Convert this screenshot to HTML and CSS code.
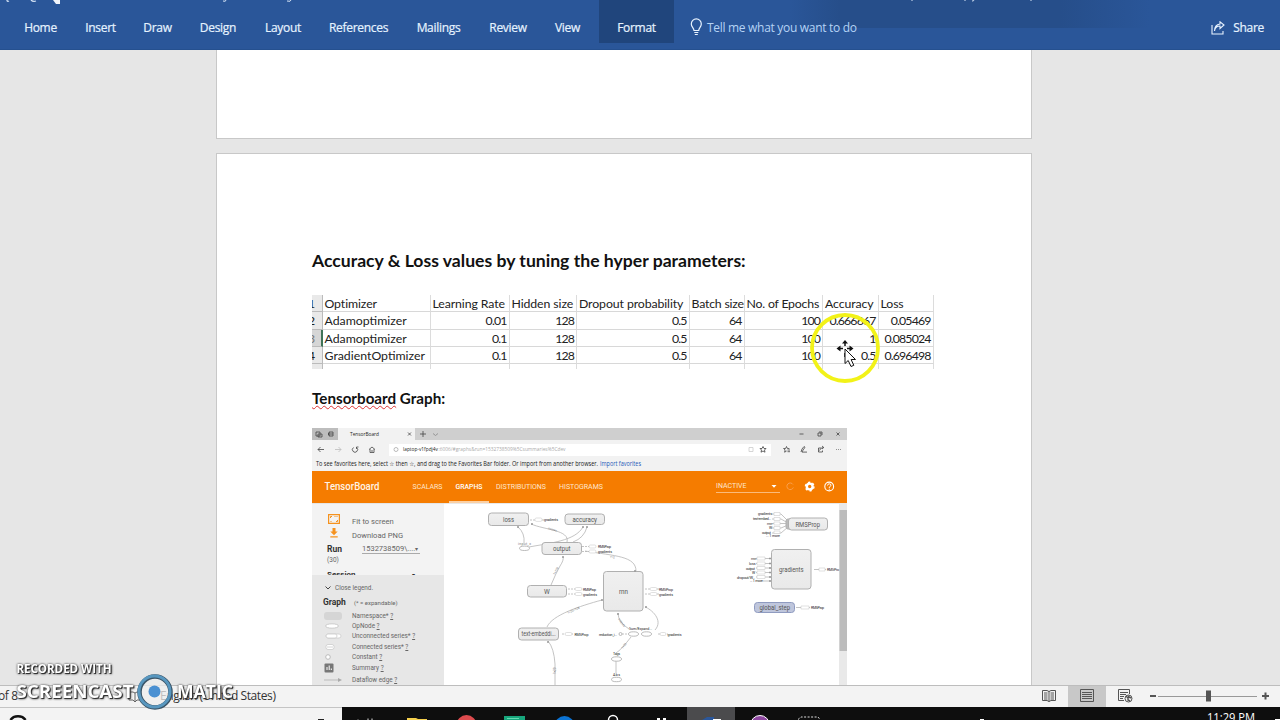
FILE: index.html
```html
<!DOCTYPE html>
<html lang="en">
<head>
<meta charset="utf-8">
<title>Word</title>
<link rel="stylesheet" href="styles.css">
</head>
<body>
<header class="ribbon">
  <svg class="titlebits" width="1280" height="5" viewBox="0 0 1280 5">
    <path d="M7 0q0 2 2 1M31 0q2 2 5 1" stroke="#d6e4f6" fill="none" stroke-width="1.3"/>
    <path d="M53 0h7v4h-4z" fill="#f1f5fb"/>
    <path d="M223 1q3 1 3-1M287 1q4 1 4-1M912 0v1M965 1v-1M974 0q0 1-2 1M1031 0v1" stroke="#d6e4f6" fill="none"/>
  </svg>
  <nav class="tabs">
    <span class="w33">Home</span><span class="w29">Insert</span><span class="w27">Draw</span><span class="w36">Design</span><span class="w36">Layout</span><span class="w57">References</span><span class="w45">Mailings</span><span class="w36">Review</span><span class="w25">View</span>
  </nav>
  <div class="format">Format</div>
  <div class="tell">
    <svg width="13" height="18" viewBox="0 0 13 18" fill="none" stroke="#e8f3ff" stroke-width="1.2"><path d="M4 12.5C4 10 1.3 9 1.3 5.9a5 5 0 0 1 10 0C11.300 9 8.700 10 8.700 12.500zM4.300 14.500h4M4.800 16.500h3"/></svg>
    <span>Tell me what you want to do</span>
  </div>
  <div class="share">
    <svg width="14" height="14" viewBox="0 0 14 14" fill="none" stroke="#e8f3ff" stroke-width="1.1"><path d="M1 4v9h11v-3M3.500 10C4 6.500 6 5 9 5V7.500L13 4 9 .8V3C5.500 3.500 3.500 6 3.500 10z"/></svg>
    <span>Share</span>
  </div>
</header>

<main class="workspace">
  <section class="page page-prev"></section>
  <section class="page page-main">
    <h1>Accuracy &amp; Loss values by tuning the hyper parameters:</h1>
    <div class="sheet">
      <div class="row">
        <b class="idx">1</b><i>Optimizer</i><i>Learning Rate</i><i>Hidden size</i><i>Dropout probability</i><i class="snug">Batch size</i><i class="snug">No. of Epochs</i><i>Accuracy</i><i>Loss</i>
      </div>
      <div class="row num">
        <b class="idx">2</b><i>Adamoptimizer</i><i>0.01</i><i>128</i><i>0.5</i><i>64</i><i>100</i><i>0.666667</i><i>0.05469</i>
      </div>
      <div class="row num">
        <b class="idx sel">3</b><i>Adamoptimizer</i><i>0.1</i><i>128</i><i>0.5</i><i>64</i><i>100</i><i>1</i><i>0.085024</i>
      </div>
      <div class="row num">
        <b class="idx">4</b><i>GradientOptimizer</i><i>0.1</i><i>128</i><i>0.5</i><i>64</i><i>100</i><i>0.5</i><i>0.696498</i>
      </div>
      <div class="row tail"><b class="idx"></b><i></i><i></i><i></i><i></i><i></i><i></i><i></i><i></i></div>
    </div>
    <h2><span class="misspelt">Tensorboard</span> Graph:</h2>

    <div class="shot">
      <svg class="browser" width="535" height="43" viewBox="312 428 535 43">
        <path fill="#cfcfcf" d="M312 428h535v12H312z"/>
        <path fill="#bdbdbd" d="M312 428h26v12h-26z"/>
        <path fill="#f2f2f2" d="M338 428h77v12h-77zM312 440h535v31H312z"/>
        <path fill="#fff" d="M389 444h382v12H389z"/>
        <g fill="none" stroke="#444" stroke-width=".8">
          <path d="M316 432h4v4h-4zM318 434h4v3h-4zM329 432h4v4h-4zM333 434h-5m1.500-1.500L328 434l1.500 1.500"/>
          <path d="M408 432.500l3 3m0-3l-3 3M420 434h6m-3-3v6"/>
          <path stroke="#888" d="M433 433.500l2.500 2 2.500-2"/>
          <path d="M799.500 434h4M818 433h3v3h-3zM819 432h3v3M836.500 432.500l3 3m0-3l-3 3"/>
          <path d="M324 449.500h-6m2.500-2.500-2.500 2.500 2.500 2.500"/>
          <path stroke="#bbb" d="M335 449.500h6m-2.500-2.500 2.500 2.500-2.500 2.500"/>
          <path d="M353.500 447.500a2.600 2.600 0 1 0 3 0M356.500 449v-2h2"/>
          <path d="M369 449.500l3-2.500 3 2.500M370 449v3.500h4V449M372 450v2"/>
          <circle stroke="#aaa" cx="396" cy="449.500" r="2"/>
          <path stroke="#ccc" d="M749 447.500h4v4h-4z"/>
          <path d="M763 446.500l1 2h2l-1.500 1.500.5 2.200-2-1.200-2 1.200.5-2.200-1.500-1.500h2z"/>
          <path d="M786.500 446.500l.9 2h2M786.500 446.500l-.9 2h-2l1.500 1.500-.5 2.200 2-1.200M787.500 450h2.500m-2.500 1.700h2.500M801 452l1-3 2-2.500 1 .8-2 2.800-1 2h5M821 448h-2.500v4h4v-1.500M819.500 450.500q1-3 4-3m-1.500-1.500 1.800 1.500-1.800 1.500"/>
          <path stroke="#777" stroke-dasharray="1 1" d="M836 449.500h5"/>
        </g>
        <g class="tiny" font-size="5.600">
          <text x="350" y="436" textLength="29" lengthAdjust="spacingAndGlyphs">TensorBoard</text>
          <text x="403" y="451.300" textLength="35" lengthAdjust="spacingAndGlyphs">laptop-v1fpdj4v</text>
          <text x="438.500" y="451.300" textLength="127" lengthAdjust="spacingAndGlyphs" fill="#aaa">:6006/#graphs&amp;run=1532738509%5Csummaries%5Cdev</text>
          <text x="316" y="466.300" font-size="6.200" textLength="282" lengthAdjust="spacingAndGlyphs">To see favorites here, select ☆ then ☆, and drag to the Favorites Bar folder. Or import from another browser.</text>
          <text x="600" y="466.300" font-size="6.200" textLength="41" lengthAdjust="spacingAndGlyphs" fill="#1d58b8">Import favorites</text>
        </g>
      </svg>
      <div class="tbbar">
        <svg width="535" height="32" viewBox="312 471 535 32">
          <g class="robo" fill="#ffe6cf" font-size="7">
            <text x="324.500" y="490" fill="#fff3e6" font-size="10.400" font-weight="500" textLength="55" lengthAdjust="spacingAndGlyphs">TensorBoard</text>
            <text x="412.500" y="488.500" textLength="30" lengthAdjust="spacingAndGlyphs">SCALARS</text>
            <text x="455.500" y="488.500" fill="#fff" font-weight="500" textLength="27" lengthAdjust="spacingAndGlyphs">GRAPHS</text>
            <text x="496" y="488.500" textLength="50" lengthAdjust="spacingAndGlyphs">DISTRIBUTIONS</text>
            <text x="559" y="488.500" textLength="44" lengthAdjust="spacingAndGlyphs">HISTOGRAMS</text>
            <text x="716" y="488.300" textLength="30.500" lengthAdjust="spacingAndGlyphs">INACTIVE</text>
          </g>
          <path fill="#fbd0a4" d="M449 501h40v2h-40zM716 492.300h64v.8h-64z"/>
          <path fill="#fff" d="M771.500 485h5l-2.500 2.800z"/>
          <path fill="none" stroke="#f9a04d" d="M793 484.500a3.300 3.300 0 1 0 .3 3"/>
          <circle cx="809.700" cy="486.500" r="2.900" fill="none" stroke="#fff" stroke-width="2.400"/>
          <circle cx="809.700" cy="486.500" r="4.300" fill="none" stroke="#fff" stroke-width="1.400" stroke-dasharray="2.250 2.250"/>
          <circle cx="829.200" cy="486.500" r="4.400" fill="none" stroke="#fff" stroke-width="1.100"/>
          <path d="M827.500 485.500q.2-1.700 1.800-1.700t1.600 1.500q0 1-1.600 1.800v.8m0 .8v1" fill="none" stroke="#fff"/>
        </svg>
      </div>
      <div class="tbbody">
        <aside>
          <div class="ctl">
            <div class="ctlrow"><svg width="12" height="10" viewBox="0 0 12 10" fill="none" stroke="#f5921e"><path d="M.6.6h10.800v8.800H.6z" stroke-width="1.200"/><path d="M2.500 4V2.500H4M8 7.500h1.500V6" /><path d="M6.500 2.500h3M2.500 7.500h2" stroke-dasharray="1 1"/></svg><span>Fit to screen</span></div>
            <div class="ctlrow"><svg width="12" height="10" viewBox="0 0 12 10" fill="#f5921e"><path d="M4.500 0h3v3.500h2.200L6 7.200 2.300 3.500h2.200zM2.300 8.200h7.400v1.300H2.300z"/></svg><span>Download PNG</span></div>
            <div class="run"><strong>Run</strong><span class="pick">1532738509\....<em>▾</em></span></div>
            <div class="count">(30)</div>
            <div class="session"><strong>Session</strong><em>▾</em></div>
          </div>
          <div class="legend">
            <div class="close"><svg width="6" height="4" viewBox="0 0 6 4"><path d="M.5.5 3 3 5.500.5" fill="none" stroke="#444"/></svg>Close legend.</div>
            <div class="lgraph"><strong>Graph</strong><span>(* = expandable)</span></div>
            <div class="lrow"><svg width="20" height="10"><rect x="1" y="1" width="18" height="8" rx="3" fill="#d5d5d5"/></svg><span>Namespace* <u>?</u></span></div>
            <div class="lrow"><svg width="20" height="10"><ellipse cx="9" cy="5" rx="6.500" ry="2.200" fill="#fff" stroke="#ccc"/></svg><span>OpNode <u>?</u></span></div>
            <div class="lrow"><svg width="20" height="10"><g fill="#fff" stroke="#ccc" stroke-width=".8"><rect x="3" y="3" width="15" height="4" rx="2"/><rect x="3" y="3" width="11" height="4" rx="2"/></g></svg><span>Unconnected series* <u>?</u></span></div>
            <div class="lrow"><svg width="20" height="10"><g fill="#fff" stroke="#ccc" stroke-width=".8"><rect x="3" y="2.500" width="8" height="5" rx="2"/><path d="M4 5h6"/></g></svg><span>Connected series* <u>?</u></span></div>
            <div class="lrow"><svg width="20" height="10"><circle cx="5" cy="5" r="2.300" fill="#fff" stroke="#bbb"/></svg><span>Constant <u>?</u></span></div>
            <div class="lrow tall"><svg width="20" height="10"><rect x="1.500" y=".5" width="9" height="9" rx="1" fill="#777"/><path d="M4 7V4m2.200 3V2.500M8.300 7V5.500" stroke="#fff"/></svg><span>Summary <u>?</u></span></div>
            <div class="lrow tall"><svg width="20" height="10"><path d="M1 5h15" stroke="#bbb"/><path d="M15 3l4 2-4 2z" fill="#aaa"/></svg><span>Dataflow edge <u>?</u></span></div>
          </div>
        </aside>
        <svg class="graph" width="403" height="182" viewBox="444 503 403 182">
          <defs>
            <linearGradient id="node" x1="0" y1="0" x2="0" y2="1"><stop offset="0" stop-color="#f0f0f0"/><stop offset="1" stop-color="#e9e9e9"/></linearGradient>
          </defs>
          <path fill="#fff" d="M444 503h403v182H444z"/>
          <path fill="#e9e9e9" d="M444 503h403v1H444zM839 504h8v181h-8z"/>
          <path fill="#bcbcbc" d="M839.500 510h7.500v141h-7.500z"/>
          <g fill="none" stroke="#b5b5b5" stroke-width=".8">
            <path d="M524 543Q525 533 518 527M529 547C550 543 575 541 583 527M567 542C570 530 545 530 531 524M573 542Q584 538 587 527"/>
            <path d="M551 585Q556 573 560 566Q564 560 563 557M585 551C615 556 636 556 636 571"/>
            <path d="M547 627C552 615 580 606 602 600M555 685V664Q554 648 548 641M629 629Q618 622 618 613M655 630C664 620 651 609 645 607M616 653Q621 650 631 637M616 673V661"/>
            <path stroke-dasharray="2 1" d="M530 520h14M582 546.500h15M582 551.500h15M568 589h14M568 594h14M645 589h14M645 594h14M562 634h12M658 634h10M619 634h9"/>
            <path d="M772 514h9l8 8M772 519h9l7 4M772 523.500h15M772 528h9l7-3M772 533h9l7-6M756 558.500h16M756 563.500h16M756 568h16M756 572.500h16M756 577h16M763 581h9M814 569.500h12M796 607.500h14"/>
          </g>
          <g fill="#fff" stroke="#ccc" stroke-width=".6">
            <rect x="535" y="518" width="7" height="3.400" rx="1.500"/><rect x="589" y="545" width="7" height="3" rx="1.500"/><rect x="589" y="550" width="7" height="3" rx="1.500"/><rect x="575" y="587.500" width="7" height="3" rx="1.500"/><rect x="575" y="592.500" width="7" height="3" rx="1.500"/><rect x="650" y="587.500" width="7" height="3" rx="1.500"/><rect x="650" y="592.500" width="7" height="3" rx="1.500"/><rect x="565" y="632.500" width="7" height="3" rx="1.500"/><rect x="660" y="632.500" width="6" height="3" rx="1.500"/>
            <path d="M774 512.500h6v3h-6zM774 517.500h6v3h-6zM774 522h6v3h-6zM774 526.500h6v3h-6zM774 531h6v2.500h-6zM757 557h8v3h-8zM757 562h8v3h-8zM757 566.500h8v3h-8zM757 571h8v3h-8zM757 575.500h8v3h-8zM819 568h6v3h-6zM801 606h8v3h-8z"/>
          </g>
          <g fill="#fff" stroke="#aaa" stroke-width=".8">
            <ellipse cx="524.500" cy="548.300" rx="5" ry="2.200"/><ellipse cx="633.500" cy="634" rx="5" ry="2.200"/><ellipse cx="646.500" cy="634" rx="5" ry="2.200"/><ellipse cx="616.500" cy="659" rx="5" ry="2.200"/><ellipse cx="616.500" cy="679.500" rx="5" ry="2.200"/><circle cx="620.500" cy="634" r="1.500"/>
          </g>
          <g fill="url(#node)" stroke="#b0b0b0">
            <rect x="488.500" y="513" width="40" height="12.500" rx="3"/><rect x="565" y="514" width="39.500" height="10.500" rx="3"/><rect x="542" y="542.500" width="39.500" height="12" rx="3"/><rect x="527.500" y="585.500" width="39" height="11.500" rx="3"/><rect x="603.500" y="571.500" width="39.500" height="39.500" rx="3"/><rect x="518.500" y="628" width="40" height="12" rx="3"/><rect x="786" y="519" width="6" height="10" rx="2" fill="#bbb"/><rect x="788.500" y="518" width="39" height="12" rx="3"/><rect x="771.500" y="549.500" width="39.500" height="39.500" rx="3"/>
            <rect x="754.500" y="602.500" width="40" height="10" rx="3" fill="#bfc6dc" stroke="#8f9bc0"/>
          </g>
          <path fill="none" stroke="#999" stroke-width="1.500" d="M769 558.500h2M769 563.500h2M769 568h2M769 572.500h2M769 577h2M769 581h2M563 556v2M635 570v2M601 600h2M518 526v2M583 526v2M587 526v2M531 524h2M618 613v2M645 607h2M548 641v2"/>
          <g class="robo" fill="#555" font-size="6.500">
            <text x="503" y="521.500" textLength="11" lengthAdjust="spacingAndGlyphs">loss</text><text x="572.500" y="521.500" textLength="24.500" lengthAdjust="spacingAndGlyphs">accuracy</text><text x="553" y="551" textLength="17.500" lengthAdjust="spacingAndGlyphs">output</text><text x="544" y="593.500">W</text><text x="619" y="593.500" textLength="9" lengthAdjust="spacingAndGlyphs">rnn</text><text x="521.500" y="636" textLength="34" lengthAdjust="spacingAndGlyphs">text-embeddi...</text><text x="795.500" y="526.500" textLength="24.500" lengthAdjust="spacingAndGlyphs">RMSProp</text><text x="779" y="571.500" textLength="24.500" lengthAdjust="spacingAndGlyphs">gradients</text><text x="759.500" y="610" textLength="30.500" lengthAdjust="spacingAndGlyphs">global_step</text>
          </g>
          <g class="robo" fill="#222" font-size="3.600">
            <text x="544" y="521" textLength="14">gradients</text><text x="518" y="545" textLength="13" fill="#777">input_x</text>
            <text x="598" y="547.500" textLength="13">RMSProp</text><text x="598" y="552.800" textLength="14">gradients</text>
            <text x="583" y="590.500" textLength="13">RMSProp</text><text x="583" y="595.500" textLength="14">gradients</text>
            <text x="659" y="590.500" textLength="14">RMSProp</text><text x="659" y="595.500" textLength="14">gradients</text>
            <text x="574.500" y="635.500" textLength="14">RMSProp</text><text x="599" y="635.500" textLength="18">reduction_i...</text><text x="667.500" y="635.500" textLength="14">gradients</text><text x="629" y="630" textLength="23">Sum/Expand...</text><text x="613" y="655" textLength="7">Tags</text><text x="613" y="676" textLength="7">Abs</text>
            <text x="758" y="515" textLength="14">gradients</text><text x="753" y="519.700" textLength="18">text-embed...</text><text x="767" y="524.500">rnn</text><text x="769" y="529">W</text><text x="762" y="533.500" textLength="9">output</text><text x="766" y="537" textLength="14">... 1 more</text>
            <text x="751" y="560">rnn</text><text x="749" y="564.500">loss</text><text x="746" y="569.500" textLength="9">output</text><text x="752" y="574">W</text><text x="737" y="578.500" textLength="18">dropout/W...</text><text x="750" y="582" textLength="13">... 1 more</text>
            <text x="827" y="571" textLength="12">RMSPro</text><text x="811" y="609" textLength="13">RMSProp</text>
          </g>
          <g class="robo" fill="#777" font-size="3">
            <text transform="translate(555 575) rotate(-62)">?×128</text><text transform="translate(568 614) rotate(-25)">?×20×128</text><text transform="translate(548 529) rotate(18)">scores</text><text transform="translate(556 674) rotate(-90)">?×20</text><text transform="translate(618 619) rotate(55)">outputs</text><text transform="translate(623 649) rotate(-55)">?×20</text><text transform="translate(610 558) rotate(5)">?×2</text>
          </g>
        </svg>
      </div>
    </div>
  </section>

  <svg class="pointer" width="72" height="72" viewBox="0 0 72 72">
    <circle cx="36" cy="36" r="33" fill="none" stroke="#f2f218" stroke-width="3.800"/>
    <path d="M36 30v4M36 41v4M29 36.500h5M38 36.500h5" stroke="#111" stroke-width="1.500"/>
    <path d="M33 31.500h6L36 28zM31.500 33.500v6L27.500 36.500zM40.500 33.500v6l4-3z" fill="#111"/>
    <path d="M36 37v14.500l3.200-3 2.800 6 2.800-1.200-2.700-5.800H46.500z" fill="#fff" stroke="#111"/>
  </svg>
</main>

<footer class="status">
  <span class="count8">of 8</span>
  <svg class="book" width="14" height="12" viewBox="0 0 14 12" fill="none" stroke="#666"><path d="M7 2v9M1 1h4l2 1 2-1h4v8H9L7 11 5 9H1z"/></svg>
  <span class="lang">English (United States)</span>
  <div class="views">
    <svg width="14" height="14" viewBox="0 0 14 14" fill="none" stroke="#555"><path d="M.5 1.500H5l2 1 2-1h4.500v10H9l-2 1-2-1H.500zM7 2v11M2 4h3.500M2 6h3.500M2 8h3.500M2 10h3.500M8.500 4H12M8.500 6H12M8.500 8H12M8.500 10H12"/></svg>
    <span class="on"><svg width="14" height="14" viewBox="0 0 14 14" fill="none" stroke="#555"><path d="M.500.500h13v12H.500zM2 3.500h10M2 5.500h10M2 7.500h10M2 9.500h10"/></svg></span>
    <svg width="15" height="14" viewBox="0 0 15 14" fill="none" stroke="#555"><path d="M6 11.500H.500v-11h11V5M2 3.500h8M2 5.500h6M2 7.500h4M2 9.500h3"/><circle cx="10.500" cy="9.500" r="3.500" fill="#f3f3f3"/><path d="M8 7l2 2v2l2 1M11 6.500l-.5 1.500 3 1" stroke-width="1.400"/></svg>
  </div>
  <svg class="zoom" width="119" height="14" viewBox="0 0 119 14"><path d="M8 7.500h99" stroke="#999"/><path d="M0 6h6v2H0zM56 1.500h5v11h-5zM112 6h7v2h-7zM114.500 3.500h2v7h-2z" fill="#555"/></svg>
</footer>

<div class="taskbar">
  <svg width="1280" height="13" viewBox="0 707 1280 13">
    <path fill="#f3f3f3" d="M0 707h342v13H0z"/>
    <path stroke="#c4c4c4" d="M0 707.500h342"/>
    <path fill="none" stroke="#111" stroke-width="2.500" d="M10.500 720a8.500 7 0 0 1 15 0"/>
    <path stroke="#222" d="M318 719.500h6"/>
    <path fill="#0e0e0e" d="M342 707h938v13H342z"/>
    <path fill="#4b4b4d" d="M687 707h48v13h-48z"/>
    <path stroke="#ddd" d="M358 719.500v1M368 718.500v2M372 718.500v2"/>
    <path fill="#f5d04d" d="M407 718h9l2 1h9v2h-20z"/>
    <circle cx="466.500" cy="725" r="10" fill="#dd4b4e"/>
    <path fill="#17a67c" d="M504 716h21v5h-21z"/><path fill="#65d9b1" d="M507 718h12v1h-12z"/>
    <circle cx="564.500" cy="726" r="10" fill="#0c74d4"/>
    <circle cx="613" cy="720" r="4.500" fill="none" stroke="#fff" stroke-width="1.500"/>
    <path stroke="#fff" stroke-width="2" d="M657 719h3M663 719h3"/>
    <path fill="#2b579a" d="M702 720l5-3h7v3z"/><path fill="#fff" d="M713 719h8v1h-8z"/>
    <circle cx="760" cy="725" r="9.500" fill="#8e47a0" stroke="#fff"/>
    <path stroke="#ddd" stroke-dasharray="2 1.500" d="M798 719.500l3-2.500h17l2 2.500" fill="none"/>
    <path stroke="#fff" d="M980 719.500h4M1275 719.500h5"/>
    <text x="1207" y="722" class="clock" textLength="48" lengthAdjust="spacingAndGlyphs">11:29 PM</text>
  </svg>
</div>

<svg class="watermark" width="240" height="60" viewBox="0 655 240 60">
  <g class="wm">
    <text x="16.500" y="672.500" font-size="11.500" textLength="95" lengthAdjust="spacingAndGlyphs">RECORDED WITH</text>
    <text x="16.500" y="697.500" font-size="17" textLength="117" lengthAdjust="spacingAndGlyphs">SCREENCAST</text>
    <text x="177" y="697.500" font-size="17" textLength="56" lengthAdjust="spacingAndGlyphs">MATIC</text>
  </g>
  <circle cx="155" cy="692" r="15.500" fill="#eee" fill-opacity=".75" stroke="#3b5568" stroke-width="4.500"/>
  <circle cx="154.500" cy="691.500" r="15.500" fill="none" stroke="#5897bf" stroke-width="3"/>
  <circle cx="154.500" cy="691.500" r="6" fill="#4a90d2"/>
</svg>
</body>
</html>
```
FILE: styles.css
```css
* { box-sizing: border-box; }
body {
  margin: 0; width: 1280px; height: 720px; overflow: hidden; position: relative;
  display: flex; flex-direction: column;
  font-family: "Open Sans", "Noto Sans", sans-serif; background: #e6e6e6;
}
svg { display: block; flex: none; }

.ribbon {
  height: 50px; flex: none; display: flex; position: relative;
  background: linear-gradient(90deg, transparent 790px, #264e8a 840px, #264e8a 1060px, transparent 1150px) 0 0 / 100% 28px no-repeat, #2a5699;
  color: #e6f3ff; font-size: 12px; letter-spacing: -.3px; line-height: 16px;
  border-bottom: 1px solid #25508f;
}
.titlebits { position: absolute; left: 0; top: 0; }
.tabs { display: flex; gap: 29px; padding: 20px 0 0 24px; width: 599px; flex: none; }
.tabs span { display: flex; justify-content: center; white-space: nowrap; flex: none; }
.tabs, .format, .share { -webkit-text-stroke: .2px currentColor; }
.w25 { width: 25px; } .w27 { width: 27px; } .w29 { width: 29px; } .w33 { width: 33px; }
.w36 { width: 36px; } .w45 { width: 45px; } .w57 { width: 57px; }
.format { width: 75px; height: 43px; padding-top: 20px; text-align: center; background: #20457c; }
.tell { display: flex; gap: 4px; padding: 18px 0 0 16px; color: #b5d3f5; }
.tell span { padding-top: 2px; white-space: nowrap; }
.share { margin-left: auto; display: flex; gap: 8px; padding: 21px 16px 0 0; }
.share span { margin-top: -1px; }

.workspace { height: 635px; flex: none; overflow: hidden; position: relative; padding-left: 216px; }
.page { width: 816px; background: #fff; border: 1px solid #c8c8c8; }
.page-prev { height: 89px; border-top: 0; }
.page-main { height: 540px; margin-top: 14px; padding: 95px 0 0 95px; font-family: Lato, sans-serif; color: #111; }
h1 { margin: 0; font-size: 17.600px; line-height: 24px; height: 46px; font-weight: 700; white-space: nowrap; }
h2 { margin: 0; font-size: 15.200px; line-height: 20px; padding-top: 19px; height: 59px; font-weight: 700; }
.misspelt { text-decoration: underline wavy #d33 1px; text-underline-offset: 1px; text-decoration-skip-ink: none; }

.sheet { width: 622px; height: 74px; font-size: 12.300px; color: #222; }
.row {
  display: grid; grid-template-columns: 10.500px 108px 79px 67.500px 112.500px 55px 78.500px 55.500px 55px;
  height: 17.250px; line-height: 17px; letter-spacing: -.1px;
}
.row i, .row b { font-style: normal; font-weight: 400; white-space: nowrap; border-right: 1px solid #dcdcdc; border-bottom: 1px solid #d8d8d8; padding: 0 2px; overflow: hidden; }
.row .snug { letter-spacing: -.2px; padding: 0 0 0 2px; }
.row.num i { text-align: right; padding: 0 2px 0 0; letter-spacing: -.85px; }
.row.num i:nth-child(2) { text-align: left; padding-left: 2px; letter-spacing: 0; }
.row .idx { background: #e9e9e9; border-color: #bbb; padding: 0; text-indent: -4px; }
.row .sel { background: #d6d6d6; border-right: 2px solid #3f7458; color: #777; }
.row.tail { height: 5px; }
.row.tail i, .row.tail b { border-bottom: 0; }

.shot { width: 535px; font-family: Roboto, sans-serif; }
.tiny { font-family: "Open Sans", "DejaVu Sans", sans-serif; fill: #222; }
.robo { font-family: Roboto, sans-serif; }
.tbbar { height: 32px; background: #f57c00; }
.tbbody { display: flex; height: 182px; }
aside { width: 132px; color: #666; }
.ctl { height: 72px; background: #f3f3f3; border-top: 1px solid #e5e5e5; padding: 10px 0 0 16px; overflow: hidden; }
.ctlrow { display: flex; gap: 12px; height: 14px; line-height: 15px; font-size: 7.600px; }
.run { display: flex; height: 14px; align-items: center; gap: 20px; margin-left: -1px; }
.run strong { font-size: 8.500px; color: #333; }
.pick { width: 58px; border-bottom: 1px solid #aaa; font-size: 7.500px; line-height: 9px; display: flex; justify-content: space-between; }
em { font-style: normal; font-size: 6px; padding-right: 2px; }
.count { font-size: 6.500px; line-height: 9px; margin-left: -1px; height: 13.500px; }
.session { display: flex; justify-content: space-between; width: 90px; margin-left: -1px; font-size: 8px; line-height: 10px; color: #333; }
.legend { height: 110px; background: #e7e7e7; padding: 6px 0 0 11px; overflow: hidden; font-size: 6.350px; }
.close { display: flex; gap: 4px; height: 14px; line-height: 14px; align-items: center; padding-left: 2px; }
.lgraph { display: flex; align-items: center; height: 14px; gap: 8px; }
.lgraph strong { font-size: 8.500px; color: #333; }
.lgraph span { font-size: 6px; }
.lrow { display: flex; gap: 9px; height: 10.200px; line-height: 10.200px; align-items: center; white-space: nowrap; }
.lgraph + .lrow { margin-top: 2px; }
.lrow.tall { height: 12px; }

.pointer { position: absolute; left: 809px; top: 262px; }

.status {
  height: 22px; flex: none; display: flex; align-items: center; background: #f3f3f3;
  border-top: 1px solid #bdbdbd; font-size: 12px; letter-spacing: -.4px; color: #333; white-space: nowrap;
}
.count8, .lang { padding-bottom: 2px; }
.count8 { width: 132px; margin-left: -4px; padding-left: 2px; }
.lang { margin-left: 18px; }
.views { margin-left: auto; display: flex; align-items: center; gap: 12px; height: 21px; }
.views > svg, .views .on svg, .zoom { margin-bottom: 2px; }
.views .on { width: 38px; height: 21px; display: flex; align-items: center; justify-content: center; background: #c8c8c8; }
.zoom { margin-left: 17px; margin-right: 11px; }
.taskbar { height: 13px; flex: none; }
.clock { font-family: "Open Sans", sans-serif; font-size: 12px; fill: #fff; }

.watermark { position: absolute; left: 0; top: 655px; }
.wm { font-family: "Open Sans", sans-serif; font-weight: 700; fill: #fff; filter: drop-shadow(1px 1px 0 #333) drop-shadow(0 0 1px #333); }
```
